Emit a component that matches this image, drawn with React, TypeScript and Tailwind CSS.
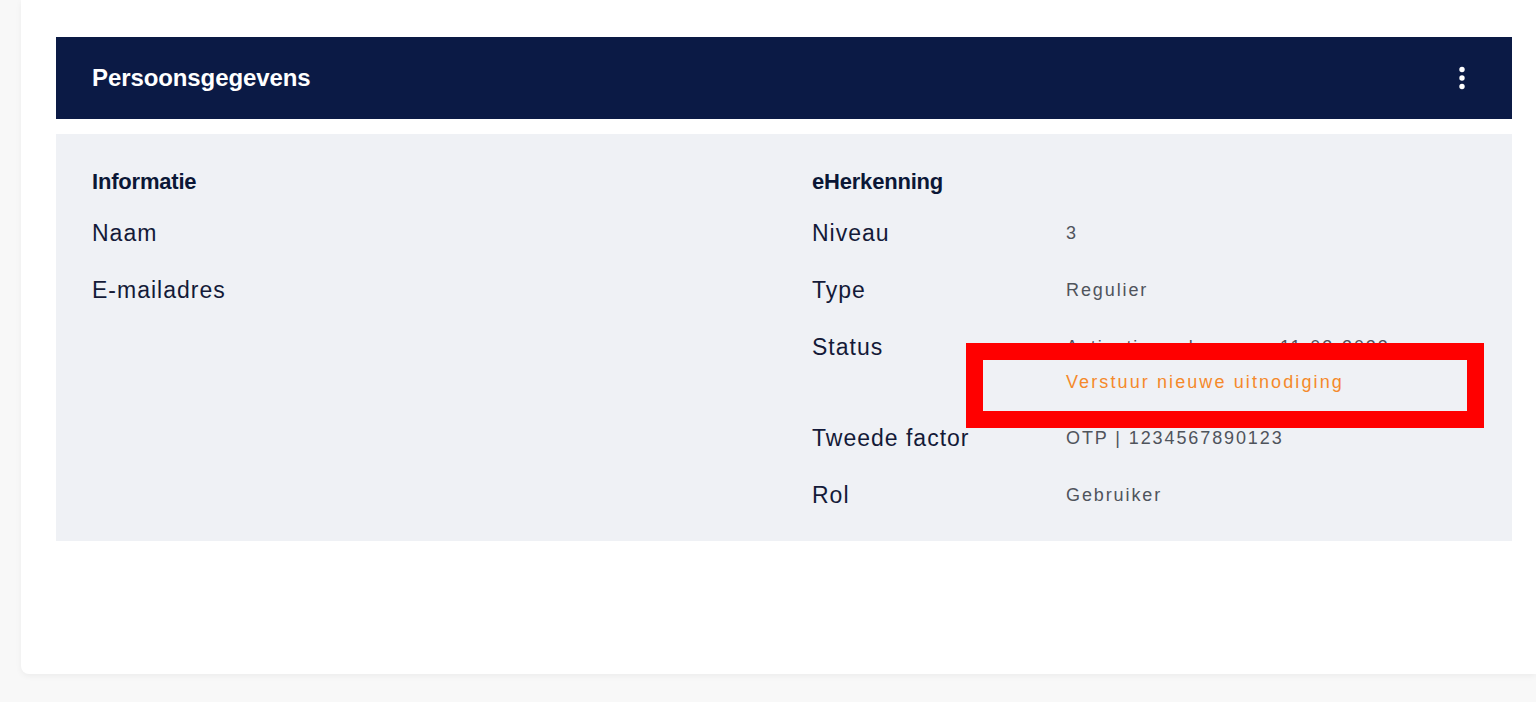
import React from 'react';

const sans = { fontFamily: '"Liberation Sans", Arial, sans-serif' };

function Kebab() {
    return (
        <svg width="8" height="24" viewBox="0 0 8 24" fill="currentColor" className="text-white">
            <circle cx="4" cy="3.5" r="2.7" />
            <circle cx="4" cy="12" r="2.7" />
            <circle cx="4" cy="20.5" r="2.7" />
        </svg>
    );
}

interface Row {
    label: string;
    value?: string;
    action?: string;
}

const eherkenning: Row[] = [
    { label: 'Niveau', value: '3' },
    { label: 'Type', value: 'Regulier' },
    { label: 'Status', value: 'Activatie verlopen op 11-03-2023', action: 'Verstuur nieuwe uitnodiging' },
    { label: 'Tweede factor', value: 'OTP | 1234567890123' },
    { label: 'Rol', value: 'Gebruiker' },
];

const informatie: Row[] = [{ label: 'Naam' }, { label: 'E-mailadres' }];

function Heading({ children }: { children: React.ReactNode }) {
    return (
        <h3 className="text-[22px] font-bold leading-[26px] text-[#0b1736] tracking-[-0.2px] mb-[10px]">{children}</h3>
    );
}

function DataRow({ row }: { row: Row }) {
    return (
        <div className="flex">
            <div className="w-[254px] shrink-0 text-[23px] leading-[57px] text-[#141a38] tracking-[1px]">{row.label}</div>
            {row.value !== undefined && (
                <div className="flex flex-col">
                    <span className="text-[18px] leading-[57px] text-[#4f545c] tracking-[1.9px]">{row.value}</span>
                    {row.action && (
                        <a className="text-[18px] leading-[34px] -mt-[11px] mb-[11px] text-[#f5892a] tracking-[2.1px] cursor-pointer">
                            {row.action}
                        </a>
                    )}
                </div>
            )}
        </div>
    );
}

export default function App() {
    return (
        <div className="relative min-h-[702px] w-full overflow-hidden bg-[#f8f8f8]" style={sans}>
            <div className="ml-[21px] bg-white rounded-bl-lg shadow-[0_2px_6px_rgba(0,0,0,0.05)] pl-[35px] pr-[24px] pt-[37px] pb-[133px]">
                <div className="h-[82px] bg-[#0b1a45] flex items-center justify-between pl-[36px] pr-[46px]">
                    <h2 className="text-[24px] font-bold text-white tracking-[-0.1px] -mt-[1px]">Persoonsgegevens</h2>
                    <Kebab />
                </div>

                <div className="mt-[15px] bg-[#eff1f5] pl-[36px] pt-[35px] pb-[17px] grid grid-cols-[720px_1fr]">
                    <div>
                        <Heading>Informatie</Heading>
                        {informatie.map((r) => (
                            <DataRow key={r.label} row={r} />
                        ))}
                    </div>
                    <div>
                        <Heading>eHerkenning</Heading>
                        {eherkenning.map((r) => (
                            <DataRow key={r.label} row={r} />
                        ))}
                    </div>
                </div>
            </div>

            {/* annotation frame */}
            <div className="absolute left-[966px] top-[343px] w-[518px] h-[85px] border-[17px] border-[#ff0000] pointer-events-none"></div>
        </div>
    );
}
